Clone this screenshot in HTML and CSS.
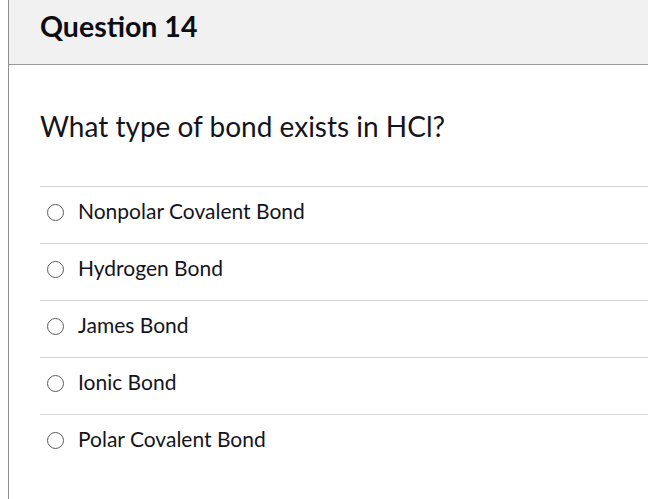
FILE: index.html
```html
<!DOCTYPE html>
<html>
<head>
<meta charset="utf-8">
<link rel="stylesheet" href="styles.css">
</head>
<body>
<div class="page">
  <div class="header"><h2 class="title">Question 14</h2></div>
  <div class="content">
    <p class="question">What type of bond exists in HCl?</p>
    <div class="answers">
      <label class="answer"><span class="radio"></span><span class="label">Nonpolar Covalent Bond</span></label>
      <label class="answer"><span class="radio"></span><span class="label">Hydrogen Bond</span></label>
      <label class="answer"><span class="radio"></span><span class="label">James Bond</span></label>
      <label class="answer"><span class="radio"></span><span class="label">Ionic Bond</span></label>
      <label class="answer"><span class="radio"></span><span class="label">Polar Covalent Bond</span></label>
    </div>
  </div>
</div>
</body>
</html>
```
FILE: styles.css
```css
html, body {
  margin: 0;
  padding: 0;
  background: #fff;
}
body {
  font-family: Lato, "Open Sans", sans-serif;
  color: #111;
}
.page {
  margin-left: 8px;
  border-left: 1px solid #8f8f8f;
  min-height: 499px;
  box-sizing: border-box;
}
.header {
  background: #f1f1f1;
  height: 65px;
  box-sizing: border-box;
  border-bottom: 1px solid #9a9a9a;
  padding: 9px 0 0 31px;
}
.title {
  margin: 0;
  font-size: 28.5px;
  line-height: normal;
  font-weight: 700;
  color: #0d0d14;
}
.content {
  padding-left: 31px;
}
.question {
  margin: 0;
  padding: 44px 0 43px;
  font-size: 28px;
  line-height: 34px;
  color: #14141c;
}
.answers {
  display: flex;
  flex-direction: column;
}
.answer {
  display: flex;
  align-items: flex-start;
  height: 57px;
  box-sizing: border-box;
  border-top: 1px solid #d4d4d4;
  padding: 11px 0 0 7px;
  gap: 14px;
  font-size: 21px;
  line-height: 25px;
  color: #14141c;
}
.radio {
  width: 15px;
  height: 15px;
  margin-top: 6px;
  border: 1px solid #5c5c5c;
  border-radius: 50%;
  flex: none;
}
```
